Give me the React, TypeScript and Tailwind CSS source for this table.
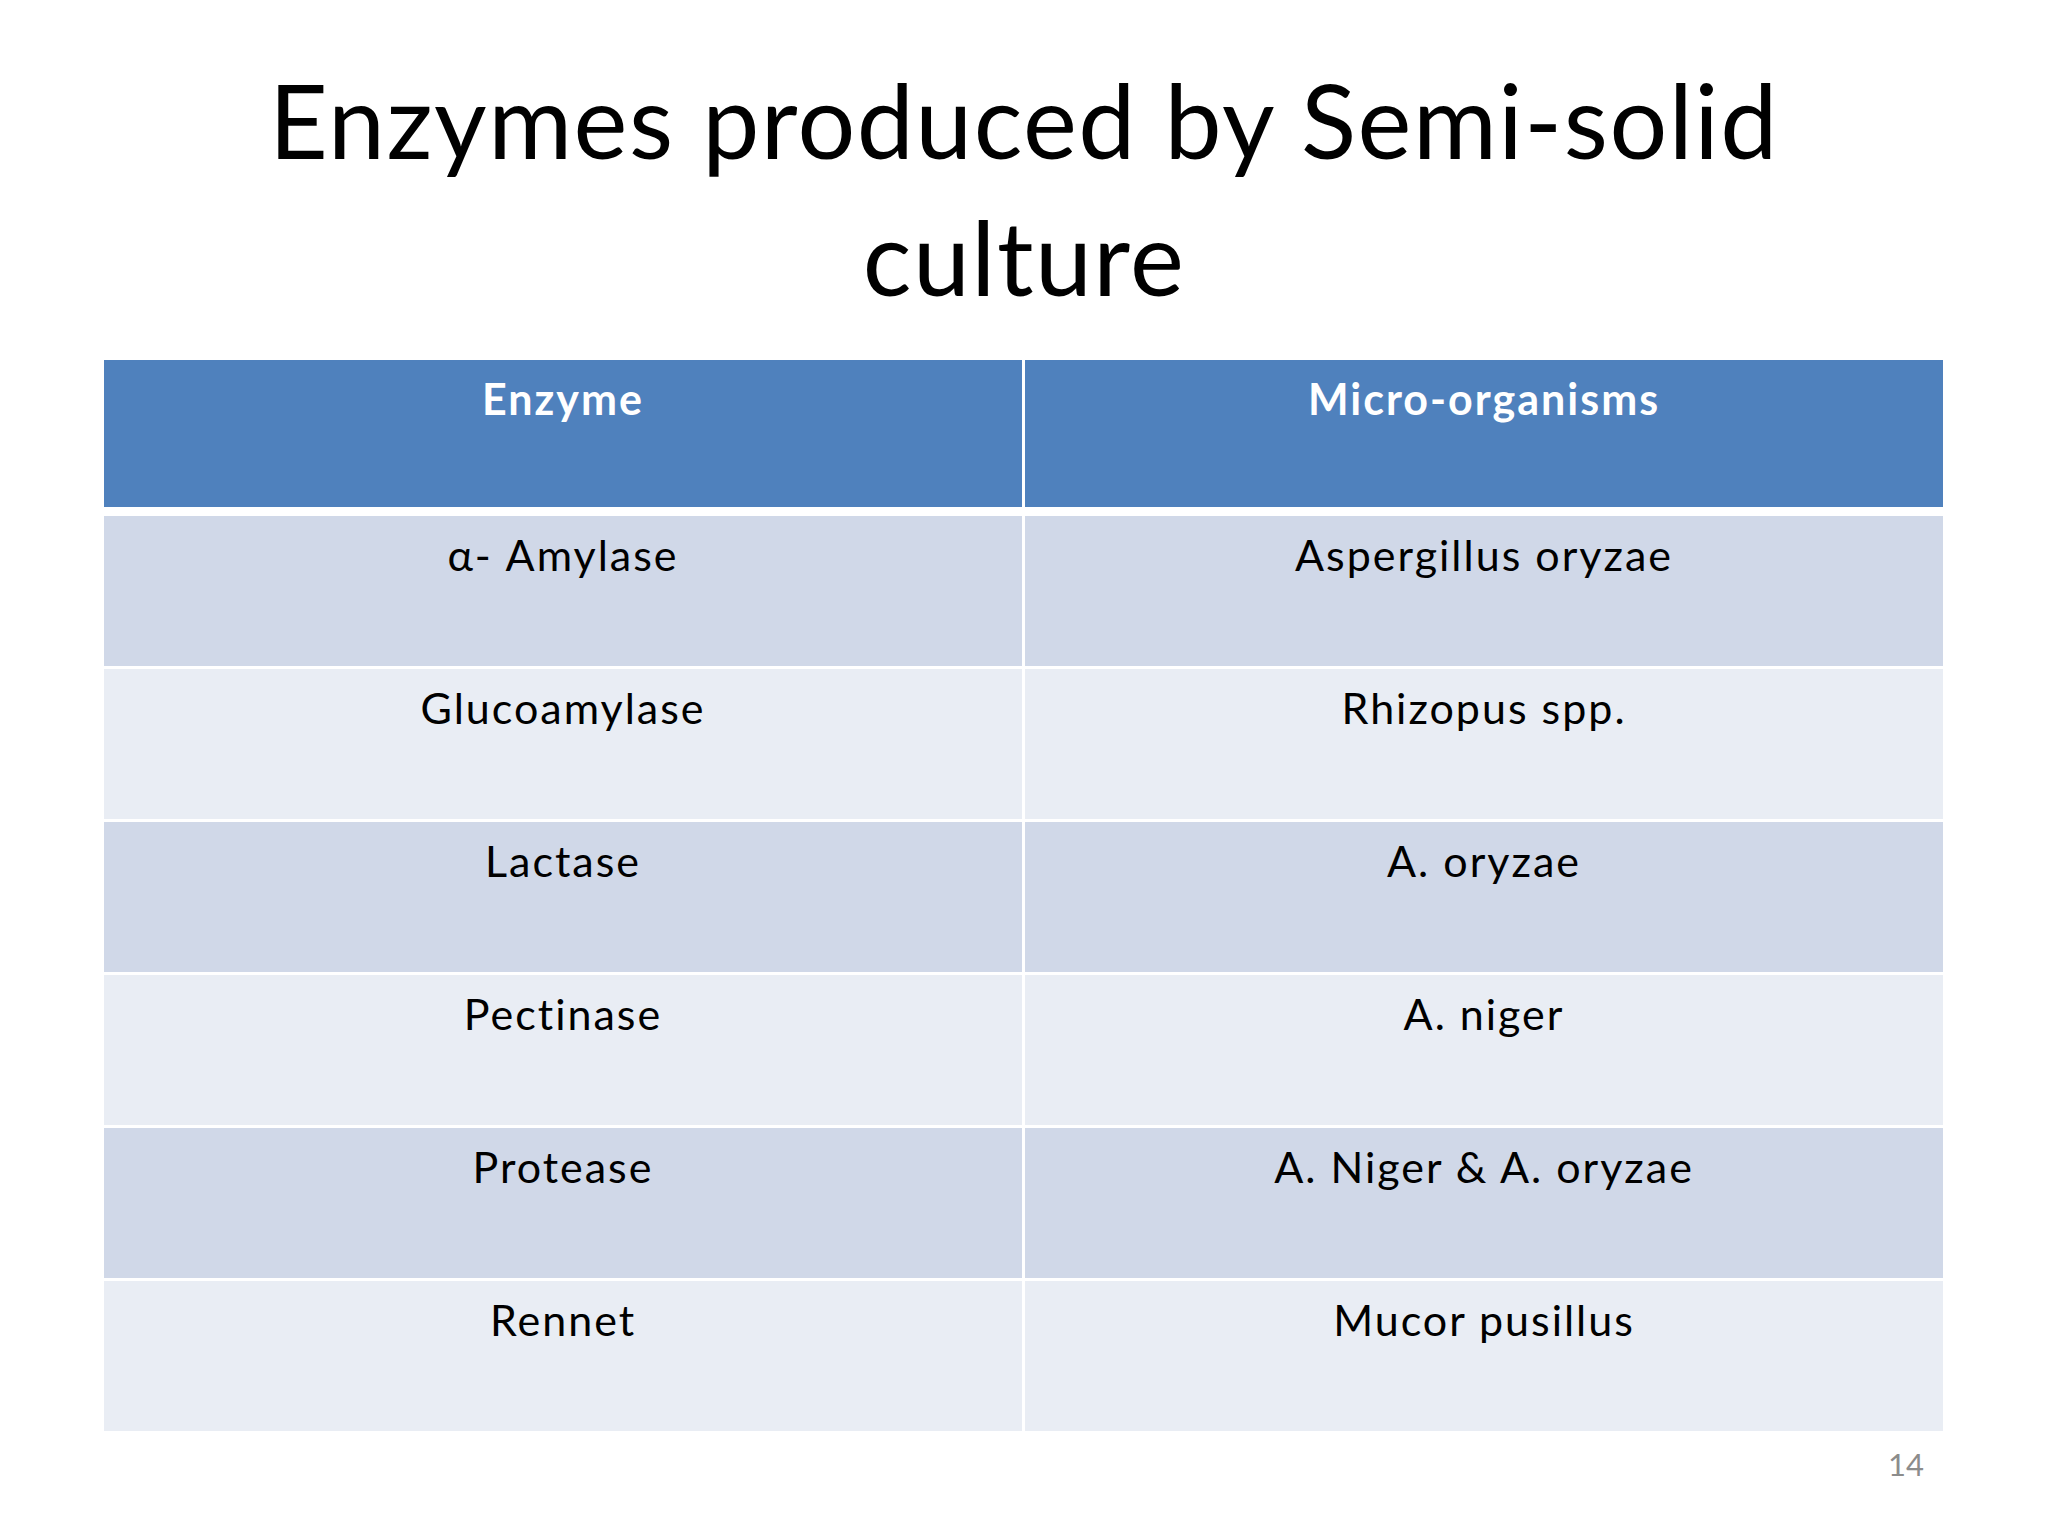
const rows = [
  { enzyme: "α- Amylase", organism: "Aspergillus oryzae" },
  { enzyme: "Glucoamylase", organism: "Rhizopus spp." },
  { enzyme: "Lactase", organism: "A. oryzae" },
  { enzyme: "Pectinase", organism: "A. niger" },
  { enzyme: "Protease", organism: "A. Niger & A. oryzae" },
  { enzyme: "Rennet", organism: "Mucor pusillus" },
];

export default function App() {
  return (
    <div className="w-[2048px] h-[1536px] bg-white font-['Lato','Open_Sans',sans-serif] text-black overflow-hidden">
      {/* Title */}
      <h1 className="pt-[51px] text-center text-[102px] leading-[137px] tracking-[1.5px] font-normal">
        Enzymes produced by Semi-solid
        <br />
        culture
      </h1>

      {/* Table */}
      <div className="ml-[104px] mt-[35px] w-[1839px] flex flex-col bg-white">
        <div className="grid grid-cols-[918px_918px] gap-x-[3px] h-[147px]">
          <div className="bg-[#4f81bd] text-white font-bold text-center text-[43px] leading-[52px] tracking-[2px] pt-[13px]">
            Enzyme
          </div>
          <div className="bg-[#4f81bd] text-white font-bold text-center text-[43px] leading-[52px] tracking-[2px] pt-[13px]">
            Micro-organisms
          </div>
        </div>
        <div className="mt-[9px] flex flex-col gap-[3px]">
          {rows.map((r, i) => (
            <div
              key={r.enzyme}
              className="grid grid-cols-[918px_918px] gap-x-[3px] h-[150px]"
            >
              <div
                className={`${i % 2 === 0 ? "bg-[#d0d8e8]" : "bg-[#e9edf4]"} text-center text-[43px] leading-[52px] tracking-[2px] pt-[13px]`}
              >
                {r.enzyme}
              </div>
              <div
                className={`${i % 2 === 0 ? "bg-[#d0d8e8]" : "bg-[#e9edf4]"} text-center text-[43px] leading-[52px] tracking-[2px] pt-[13px]`}
              >
                {r.organism}
              </div>
            </div>
          ))}
        </div>
      </div>

      {/* Slide number */}
      <div className="mt-[14px] pr-[124px] flex justify-end text-[31px] leading-[38px] text-[#8c8c8c]">
        14
      </div>
    </div>
  );
}
